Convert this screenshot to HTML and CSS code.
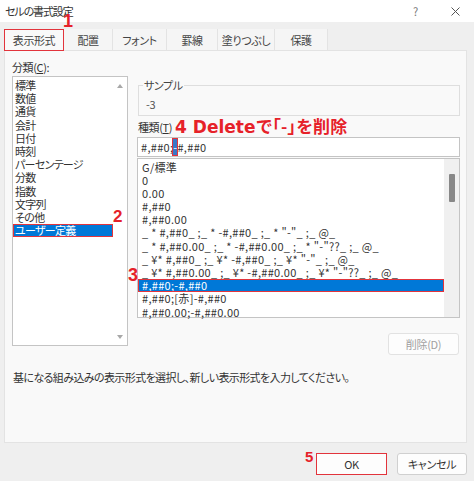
FILE: index.html
```html
<!DOCTYPE html>
<html lang="ja">
<head>
<meta charset="utf-8">
<title>セルの書式設定</title>
<link rel="stylesheet" href="styles.css">
</head>
<body>
<div class="window">
  <div class="titlebar">
    <span class="title">セルの書式設定</span>
    <span class="help">?</span>
    <svg class="close" width="9" height="9" viewBox="0 0 9 9"><path d="M0.5 0.5L8.5 8.5M8.5 0.5L0.5 8.5" stroke="#555" stroke-width="1" fill="none"/></svg>
  </div>
  <div class="tabs">
    <div class="tab active">表示形式</div>
    <div class="tab t2">配置</div>
    <div class="tab t3">フォント</div>
    <div class="tab t4">罫線</div>
    <div class="tab t5">塗りつぶし</div>
    <div class="tab t6">保護</div>
  </div>
  <div class="panel">
    <div class="main">
      <div class="left">
        <div class="label">分類(<u>C</u>):</div>
        <div class="catlist">
          <div class="items">
            <div class="item">標準</div>
            <div class="item">数値</div>
            <div class="item">通貨</div>
            <div class="item">会計</div>
            <div class="item">日付</div>
            <div class="item">時刻</div>
            <div class="item">パーセンテージ</div>
            <div class="item">分数</div>
            <div class="item">指数</div>
            <div class="item">文字列</div>
            <div class="item">その他</div>
            <div class="item sel">ユーザー定義</div>
          </div>
          <div class="vscroll"><span class="arr up"></span><span class="arr down"></span></div>
        </div>
      </div>
      <div class="right">
        <fieldset class="sample"><legend>サンプル</legend><div class="sample-val">-3</div></fieldset>
        <div class="typerow"><span class="typelabel">種類(<u>T</u>)</span><span class="note">4 Delete<span class="note-ja">で「-」を削除</span></span></div>
        <div class="input">#,##0;<span class="selchar">-</span>#,##0</div>
        <div class="fmtlist">
          <div class="items">
            <div class="item">G/標準</div>
            <div class="item">0</div>
            <div class="item">0.00</div>
            <div class="item">#,##0</div>
            <div class="item">#,##0.00</div>
            <div class="item">_ * #,##0_ ;_ * -#,##0_ ;_ * "-"_ ;_ @_</div>
            <div class="item">_ * #,##0.00_ ;_ * -#,##0.00_ ;_ * "-"??_ ;_ @_</div>
            <div class="item">_ ¥* #,##0_ ;_ ¥* -#,##0_ ;_ ¥* "-"_ ;_ @_</div>
            <div class="item">_ ¥* #,##0.00_ ;_ ¥* -#,##0.00_ ;_ ¥* "-"??_ ;_ @_</div>
            <div class="item sel">#,##0;-#,##0</div>
            <div class="item">#,##0;[赤]-#,##0</div>
            <div class="item">#,##0.00;-#,##0.00</div>
          </div>
          <div class="track"><div class="thumb"></div></div>
        </div>
        <div class="btnrow"><button class="btn disabled">削除(D)</button></div>
      </div>
    </div>
    <p class="desc">基になる組み込みの表示形式を選択し、新しい表示形式を入力してください。</p>
  </div>
  <div class="footer">
    <button class="btn ok">OK</button>
    <button class="btn cancel">キャンセル</button>
  </div>
  <span class="mark m1">1</span>
  <span class="mark m2">2</span>
  <span class="mark m3">3</span>
  <span class="mark m5">5</span>
</div>
</body>
</html>
```

FILE: styles.css
```css
* { box-sizing: border-box; }
html, body { margin: 0; padding: 0; }
body {
  width: 474px;
  height: 481px;
  overflow: hidden;
  background: #efefef;
  font-family: "Noto Sans CJK JP", "Noto Sans", sans-serif;
  font-size: 11px;
  color: #333;
  font-feature-settings: "palt";
  letter-spacing: -0.4px;
}
.window {
  position: relative;
  width: 474px;
  height: 481px;
  background: #efefef;
  display: flex;
  flex-direction: column;
}
.titlebar {
  height: 22px;
  flex-shrink: 0;
  background: #fff;
  display: flex;
  align-items: center;
  padding-left: 5px;
}
.title { flex: 1; font-size: 11px; color: #333; letter-spacing: -1.1px; line-height: 14px; }
.help { width: 6px; margin-right: 32px; color: #777; font-size: 11px; }
.close { margin-right: 14px; }

.tabs {
  display: flex;
  height: 21px;
  margin-top: 7px;
  padding-left: 4px;
  flex-shrink: 0;
  position: relative;
  z-index: 1;
}
.tab {
  display: flex;
  align-items: center;
  justify-content: center;
  background: #f5f5f5;
  border-right: 1px solid #e3e3e3;
  color: #444;
}
.tab.active {
  width: 60px;
  height: 22px;
  background: #f9f9f9;
  border: 1.5px solid #e2343c;
}
.t2 { width: 49px; }
.t3 { width: 54px; }
.t4 { width: 51px; }
.t5 { width: 57px; }
.t6 { width: 53px; }

.panel {
  margin-left: 4px;
  width: 463px;
  height: 393px;
  flex-shrink: 0;
  border: 1px solid #e3e3e3;
  background: #f9f9f9;
  padding: 8px 6px 0 7px;
}
.main { display: flex; gap: 9px; }
.left { width: 116px; }
.right { width: 323px; }
.label { height: 16px; line-height: 16px; }
.catlist {
  margin-top: 1px;
  height: 270px;
  border: 1px solid #c4c4c4;
  background: #fff;
  display: flex;
}
.items { flex: 1; min-width: 0; }
.catlist .items { padding-top: 2px; }
.catlist .item { letter-spacing: -0.7px; }
.item {
  height: 13.2px;
  line-height: 13.2px;
  padding-left: 2px;
  white-space: nowrap;
}
.item.sel {
  background: #0078d7;
  color: #fff;
  outline: 1.5px solid #e2343c;
  outline-offset: -1px;
}
.vscroll {
  width: 14px;
  display: flex;
  flex-direction: column;
  justify-content: space-between;
  align-items: center;
  padding: 7px 0 6px;
}
.arr {
  width: 0;
  height: 0;
  border-left: 3.5px solid transparent;
  border-right: 3.5px solid transparent;
}
.arr.up { border-bottom: 4px solid #a8a8a8; }
.arr.down { border-top: 4px solid #a8a8a8; }

.sample {
  margin: 18px 0 0 1px;
  padding: 3px 8px 3px 7px;
  border: 1px solid #dedede;
  min-width: 0;
}
.sample legend {
  padding: 0 1px;
  margin-left: -3px;
  line-height: 16px;
  color: #444;
}
.sample-val { line-height: 16px; color: #555; }
.typerow {
  height: 21px;
  display: flex;
  align-items: center;
  padding-left: 1px;
}
.note {
  margin-left: 3px;
  color: #e62129;
  font-family: "DejaVu Sans", "Noto Sans CJK JP", sans-serif;
  font-weight: bold;
  font-size: 17px;
  line-height: 21px;
  letter-spacing: 0;
  font-feature-settings: normal;
}
.note-ja {
  font-family: "Noto Sans CJK JP", sans-serif;
  font-feature-settings: "palt";
  margin-left: 1px;
  letter-spacing: 0.3px;
}
.input {
  height: 20px;
  border: 1px solid #c4c4c4;
  background: #fff;
  line-height: 18px;
  padding-left: 3px;
  letter-spacing: 0.3px;
}
.selchar {
  background: #3a78c8;
  color: #fff;
  outline: 1px solid #e2343c;
}
.fmtlist {
  margin-top: 1px;
  height: 160px;
  border: 1px solid #c4c4c4;
  background: #fff;
  display: flex;
}
.fmtlist .items { padding-top: 1.5px; }
.fmtlist .item { padding-left: 4px; letter-spacing: 0.3px; }
.track {
  width: 15px;
  background: #f0f0f0;
  padding-top: 15px;
  display: flex;
  justify-content: center;
}
.thumb { width: 6px; height: 28px; background: #888; border-radius: 1px; }

.btnrow {
  display: flex;
  justify-content: flex-end;
  margin-top: 15px;
  padding-right: 1px;
}
.btn {
  width: 71px;
  height: 22px;
  border: 1px solid #d0d0d0;
  background: #fdfdfd;
  border-radius: 3px;
  font-family: inherit;
  font-size: 11px;
  color: #333;
  padding: 0;
  letter-spacing: -0.3px;
  font-feature-settings: "palt";
}
.btn.disabled { color: #a0a0a0; border-color: #e2e2e2; }
.desc { margin: 14px 0 0 1px; line-height: 16px; letter-spacing: -0.6px; }

.footer {
  display: flex;
  justify-content: flex-end;
  gap: 10px;
  padding: 10px 7px 0 0;
}
.btn.ok { border: 1.5px solid #e2343c; border-radius: 0; }
.btn.cancel { width: 70px; }

.mark {
  position: absolute;
  color: #e62129;
  font-family: "Liberation Sans", Arial, sans-serif;
  font-weight: bold;
  line-height: 1;
  letter-spacing: 0;
}
.m1 { left: 63px; top: 12px; font-size: 18px; }
.m2 { left: 113px; top: 207.5px; font-size: 17px; }
.m3 { left: 128px; top: 265.5px; font-size: 18px; }
.m5 { left: 305px; top: 449px; font-size: 15px; }
```
